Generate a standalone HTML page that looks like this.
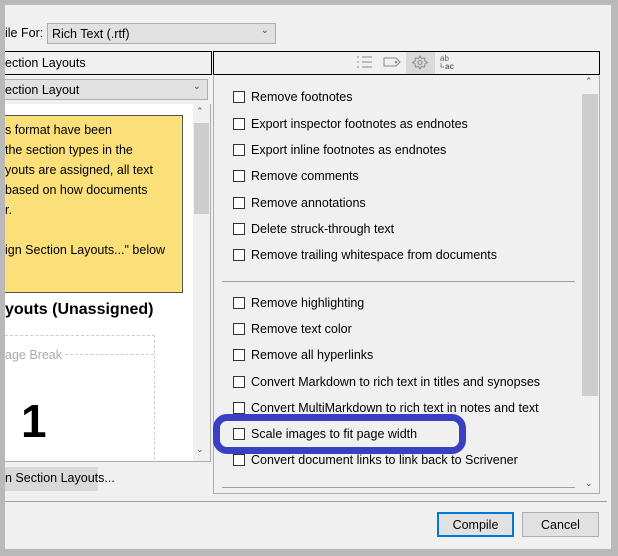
<!DOCTYPE html><html><head><style>
*{box-sizing:border-box;margin:0;padding:0}
body{width:618px;height:556px;background:#b9b9b9;position:relative;overflow:hidden;font-family:"Liberation Sans",sans-serif;font-size:12.5px;color:#000}
.a{position:absolute}
.dlg{left:5px;top:5px;width:606px;height:544px;background:#f0f0f0}
.cb{position:absolute;left:233px;width:12px;height:12px;border:1px solid #333;background:#fff}
.lb{position:absolute;left:251px;white-space:nowrap}
.yl{position:absolute;left:5px;white-space:nowrap;font-size:12.5px}
</style></head><body>
<div class="a dlg"></div>
<div class="a" style="left:5px;top:26px">ile For:</div>
<div class="a" style="left:47px;top:23px;width:229px;height:21px;background:#e1e1e1;border:1px solid #adadad;padding:3px 4px">Rich Text (.rtf)<span style="position:absolute;right:6px;top:1px;font-size:10px;color:#555">&#8964;</span></div>
<div class="a" style="left:5px;top:51px;width:207px;height:24px;border:1px solid #000;border-left:none;padding:4px 0 0 0">ection Layouts</div>
<div class="a" style="left:213px;top:51px;width:387px;height:24px;border:1px solid #000;background:#f0f0f0"></div>
<div class="a" style="left:406px;top:52px;width:29px;height:22px;background:#d9d9d9"></div>
<svg class="a" style="left:355px;top:55px" width="110" height="16" viewBox="0 0 110 16" fill="none" stroke="#888" stroke-width="1">
<path d="M2 2h2M2 7h2M2 12h2M7 2h10M7 7h10M7 12h10"/>
<path d="M29 3h12l4 4-4 4H29z"/><circle cx="41" cy="7" r="0.8"/>
<circle cx="65" cy="7.5" r="2"/><path d="M65 1l1.5 2.5 3-.5 .5 3 2.5 1.5-2.5 1.5-.5 3-3-.5L65 14l-1.5-2.5-3 .5-.5-3L57.5 7.5 60 6l.5-3 3 .5z"/>
<text x="85" y="6" font-size="8" fill="#666" stroke="none" font-family="Liberation Sans">ab</text>
<path d="M86 8v4h3"/><text x="90" y="14" font-size="8" fill="#666" stroke="none" font-family="Liberation Sans" font-weight="bold">ac</text>
</svg>
<div class="a" style="left:5px;top:79px;width:203px;height:21px;background:#e1e1e1;border:1px solid #adadad;border-left:none;padding:3px 0">ection Layout<span style="position:absolute;right:6px;top:1px;font-size:10px;color:#555">&#8964;</span></div>
<div class="a" style="left:5px;top:104px;width:206px;height:358px;background:#fff;border-right:1px solid #adadad;border-bottom:1px solid #adadad;overflow:hidden">
<div class="a" style="left:188px;top:0;width:17px;height:357px;background:#f0f0f0"></div>
<div class="a" style="left:189px;top:19px;width:15px;height:91px;background:#cdcdcd"></div>
<div class="a" style="left:191px;top:2px;font-size:9px;color:#555">&#8963;</div>
<div class="a" style="left:191px;top:340px;font-size:9px;color:#555">&#8964;</div>
<div class="a" style="left:0;top:11px;width:178px;height:178px;background:#fbe07a;border:1px solid #555;border-left:none"></div>
<div class="yl" style="top:19px;left:0">s format have been</div>
<div class="yl" style="top:39px;left:0">the section types in the</div>
<div class="yl" style="top:59px;left:0">youts are assigned, all text</div>
<div class="yl" style="top:79px;left:0">based on how documents</div>
<div class="yl" style="top:99px;left:0">r.</div>
<div class="yl" style="top:139px;left:0">ign Section Layouts..." below</div>
<div class="a" style="left:0;top:197px;font-weight:bold;font-size:16px">youts (Unassigned)</div>
<div class="a" style="left:0;top:231px;width:150px;height:130px;border:1px dashed #ccc;border-left:none"></div>
<div class="a" style="left:60px;top:250px;width:89px;border-top:1px dashed #ccc"></div>
<div class="a" style="left:0;top:244px;color:#aaa;font-size:12.5px">age Break</div>
<div class="a" style="left:16px;top:290px;font-weight:bold;font-size:46px">1</div>
</div>
<div class="a" style="left:5px;top:467px;width:93px;height:24px;background:#d9d9d9;padding:4px 0 0 0;white-space:nowrap">n Section Layouts...</div>
<div class="a" style="left:213px;top:76px;width:387px;height:418px;border:1px solid #adadad;border-top:none;background:#f0f0f0"></div>
<div class="a" style="left:582px;top:94px;width:16px;height:302px;background:#cdcdcd"></div>
<div class="a" style="left:585px;top:76px;font-size:9px;color:#555">&#8963;</div>
<div class="a" style="left:585px;top:478px;font-size:9px;color:#555">&#8964;</div>
<div class="a" style="left:222px;top:281px;width:353px;height:1px;background:#a0a0a0"></div>
<div class="a" style="left:222px;top:487px;width:353px;height:1px;background:#a0a0a0"></div>
<div class="cb" style="top:91px"></div><div class="lb" style="top:90px">Remove footnotes</div>
<div class="cb" style="top:118px"></div><div class="lb" style="top:117px">Export inspector footnotes as endnotes</div>
<div class="cb" style="top:144px"></div><div class="lb" style="top:143px">Export inline footnotes as endnotes</div>
<div class="cb" style="top:170px"></div><div class="lb" style="top:169px">Remove comments</div>
<div class="cb" style="top:197px"></div><div class="lb" style="top:196px">Remove annotations</div>
<div class="cb" style="top:223px"></div><div class="lb" style="top:222px">Delete struck-through text</div>
<div class="cb" style="top:249px"></div><div class="lb" style="top:248px">Remove trailing whitespace from documents</div>
<div class="cb" style="top:297px"></div><div class="lb" style="top:296px">Remove highlighting</div>
<div class="cb" style="top:323px"></div><div class="lb" style="top:322px">Remove text color</div>
<div class="cb" style="top:349px"></div><div class="lb" style="top:348px">Remove all hyperlinks</div>
<div class="cb" style="top:376px"></div><div class="lb" style="top:375px">Convert Markdown to rich text in titles and synopses</div>
<div class="cb" style="top:402px"></div><div class="lb" style="top:401px">Convert MultiMarkdown to rich text in notes and text</div>
<div class="cb" style="top:428px"></div><div class="lb" style="top:427px">Scale images to fit page width</div>
<div class="cb" style="top:454px"></div><div class="lb" style="top:453px">Convert document links to link back to Scrivener</div>
<div class="a" style="left:213px;top:414px;width:253px;height:40px;border:7px solid #3b3fc4;border-radius:14px"></div>
<div class="a" style="left:5px;top:501px;width:602px;height:1px;background:#a0a0a0"></div>
<div class="a" style="left:437px;top:512px;width:77px;height:25px;background:#e1e1e1;border:2px solid #0078d7;text-align:center;padding-top:4px">Compile</div>
<div class="a" style="left:522px;top:512px;width:77px;height:25px;background:#e1e1e1;border:1px solid #adadad;text-align:center;padding-top:5px">Cancel</div>
</body></html>
